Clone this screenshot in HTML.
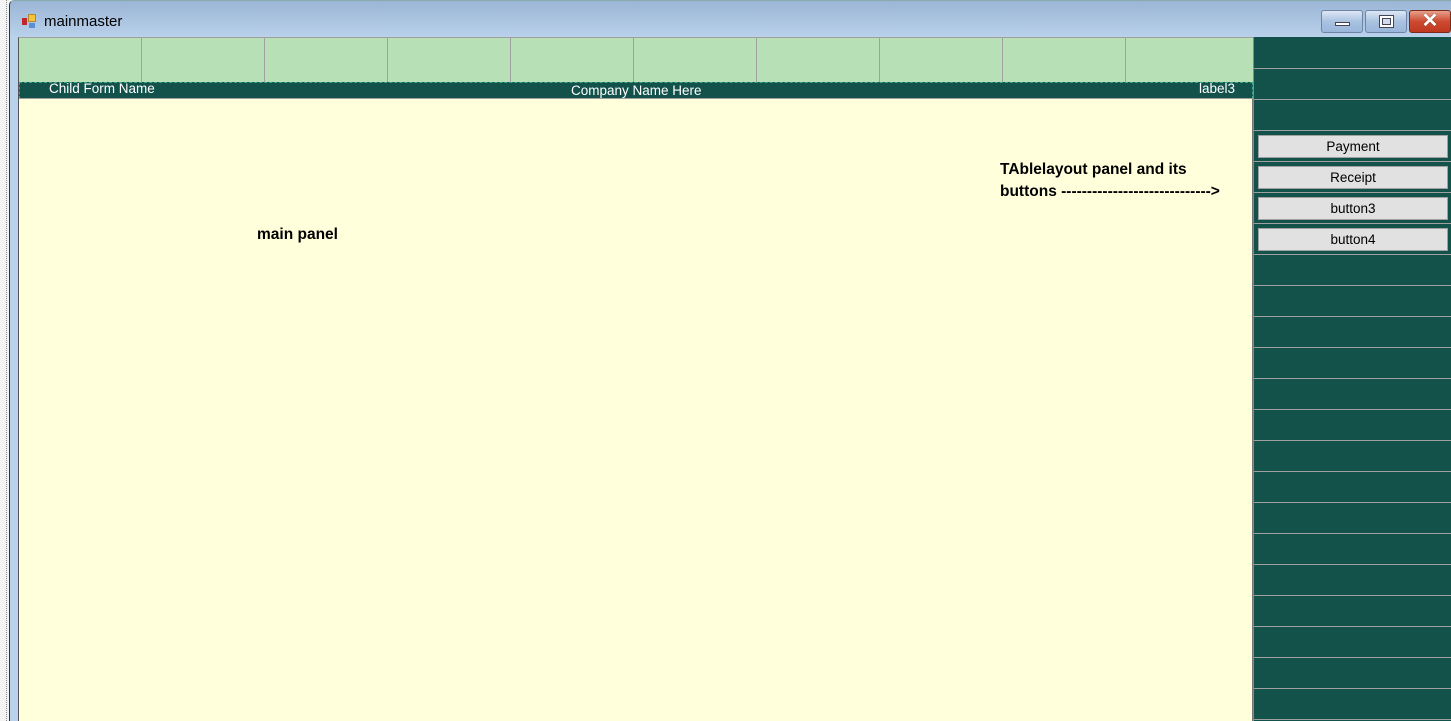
<!DOCTYPE html>
<html><head><meta charset="utf-8"><style>
*{margin:0;padding:0;box-sizing:border-box}
body{width:1451px;height:721px;overflow:hidden;background:#f4f4f4;position:relative;font-family:"Liberation Sans",sans-serif}
.a{position:absolute}
.b{position:absolute;left:1258px;width:190px;height:23px;background:#e1e1e1;border:1px solid #a0a0a0;font-size:13.5px;text-align:center;line-height:21px}
</style></head><body>
<div class="a" style="left:6px;top:0;width:1px;height:721px;border-left:1px dotted #888"></div>
<div class="a" style="left:9px;top:0;width:1442px;height:721px;background:linear-gradient(#9bb5d6,#b9d1ea 36px);border-left:1px solid #333;border-top:1px solid #8aa;border-radius:5px 0 0 0"></div>
<div class="a" style="left:11px;top:38px;width:7px;height:683px;background:#b9d1ea"></div>
<div class="a" style="left:22px;top:18px;width:5px;height:7px;background:#c0262c"></div>
<div class="a" style="left:28px;top:14px;width:8px;height:8px;background:#f3c43a;border:1px solid #b8862a"></div>
<div class="a" style="left:29px;top:23px;width:6px;height:5px;background:#5a8fd8"></div>
<div class="a" style="left:44px;top:13px;font-size:15px;color:#000">mainmaster</div>
<div class="a" style="left:1321px;top:10px;width:42px;height:23px;border:1px solid #6d84a6;border-radius:3px;background:linear-gradient(#dde8f5,#aac2e0 50%,#9ab6da)"><div class="a" style="left:13px;top:11px;width:15px;height:4px;background:#fff;border:1px solid #445"></div></div>
<div class="a" style="left:1365px;top:10px;width:42px;height:23px;border:1px solid #6d84a6;border-radius:3px;background:linear-gradient(#dde8f5,#aac2e0 50%,#9ab6da)"><div class="a" style="left:13px;top:4px;width:15px;height:13px;background:#fff;border:1px solid #445"><div class="a" style="left:2px;top:2px;width:9px;height:7px;border:1px solid #445;background:#cfdcee"></div></div></div>
<div class="a" style="left:1409px;top:10px;width:42px;height:23px;border:1px solid #7a2a1a;border-radius:3px;background:linear-gradient(#e8a08c,#cc4a30 50%,#c03820);color:#fff;font-weight:bold;font-size:20px;line-height:20px;text-align:center;text-shadow:0 0 1px #333">✕</div>
<div class="a" style="left:18px;top:37px;width:1433px;height:684px;background:#ffffdc;border-left:1px solid #555;border-top:1px solid #a0a0a0"></div>
<div class="a" style="left:19px;top:38px;width:1234px;height:44px;background:#b7e0b7;background-image:repeating-linear-gradient(90deg,transparent 0 122px,#a0a0a0 122px 123px)"></div>
<div class="a" style="left:1240px;top:38px;width:13px;height:44px;background:#b7e0b7"></div>
<div class="a" style="left:19px;top:82px;width:1234px;height:17px;background:#12524a;border:1px dashed #3aa588"></div>
<div class="a" style="left:19px;top:98px;width:1234px;height:1px;background:#a0a0a0"></div>
<div class="a" style="left:49px;top:81px;font-size:13.5px;color:#fff">Child Form Name</div>
<div class="a" style="left:571px;top:83px;font-size:13.5px;color:#fff">Company Name Here</div>
<div class="a" style="left:1199px;top:81px;font-size:13.5px;color:#fff">label3</div>
<div class="a" style="left:1252px;top:99px;width:1px;height:622px;background:#777"></div>
<div class="a" style="left:1253px;top:37px;width:198px;height:684px;background:#12524a;border-left:1px solid #888"></div>
<div class="a" style="left:1254px;top:38px;width:197px;height:683px;background-image:repeating-linear-gradient(180deg,#12524a 0 30px,#a0a0a0 30px 31px)"></div>
<div class="b" style="top:135px">Payment</div>
<div class="b" style="top:166px">Receipt</div>
<div class="b" style="top:197px">button3</div>
<div class="b" style="top:228px">button4</div>
<div class="a" style="left:1000px;top:159px;font-size:15.5px;font-weight:bold;line-height:22px;white-space:nowrap">TAblelayout panel and its<br>buttons -----------------------------&gt;</div>
<div class="a" style="left:257px;top:226px;font-size:15.5px;font-weight:bold">main panel</div>
</body></html>
